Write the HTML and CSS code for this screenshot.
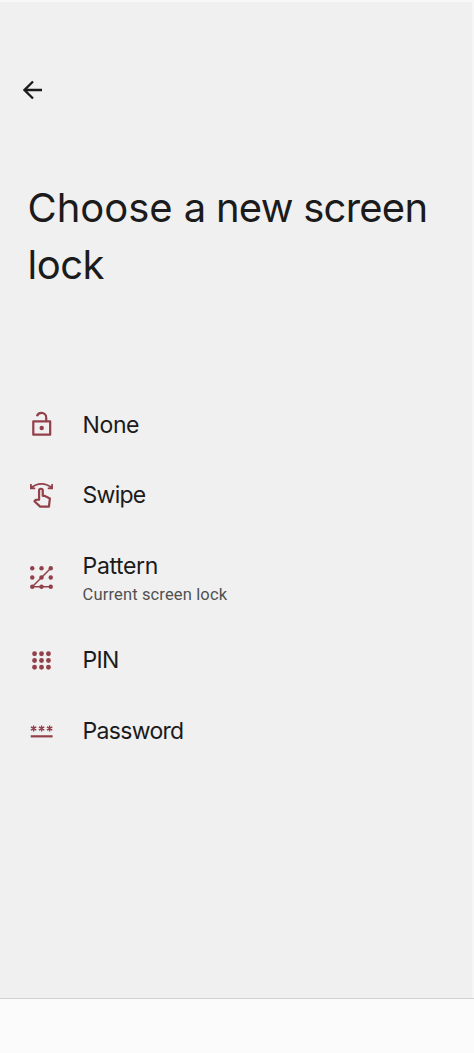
FILE: index.html
```html
<!DOCTYPE html>
<html lang="en">
<head>
<meta charset="utf-8">
<title>Choose a new screen lock</title>
<link rel="stylesheet" href="styles.css">
</head>
<body>
<main class="screen">
  <header class="toolbar">
    <svg class="back" viewBox="0 0 20 20" role="img" aria-label="Back"><path d="M19 10H2M10 1.5 1.5 10l8.500 8.500"/></svg>
  </header>
  <h1 class="title"><span class="title-start">Choose</span> <span class="title-line">a new screen</span><br><span class="title-end">lock</span></h1>
  <ul class="options">
    <li class="option">
      <svg class="icon" viewBox="0 0 28 28"><path class="line" stroke-linejoin="round" d="M5.500 10.800h17.500v13.700h-17.500zM9.300 5.500C10 3 11.700 2 14 2c2.900 0 4.900 2 4.900 4.900v4.300"/><circle cx="14.200" cy="17.600" r="2.300"/></svg>
      <span class="label none">None</span>
    </li>
    <li class="option">
      <svg class="icon" viewBox="0 0 28 28"><path class="thin" d="M3 6.500C9.500 .5 18.500 .5 25 6.500M3 2v4.500h4.500M25 2v4.500h-4.500"/><path class="line" stroke-linejoin="round" d="M11.500 18.300V8.800c0-2.400 3.800-2.400 3.800 0v5.500h1.700l5.700 2.700-1 8.500h-9.100l-5.900-5.600 1.200-1.300z"/></svg>
      <span class="label swipe">Swipe</span>
    </li>
    <li class="option tall">
      <svg class="icon" viewBox="0 0 28 28"><path class="trace" d="M23.600 4.400 4.400 23.600h19.200"/><g><circle cx="4.400" cy="4.400" r="2.300"/><circle cx="14" cy="4.400" r="2.300"/><circle cx="23.600" cy="4.400" r="2.300"/><circle cx="4.400" cy="14" r="2.300"/><circle cx="14" cy="14" r="2.300"/><circle cx="23.600" cy="14" r="2.300"/><circle cx="4.400" cy="23.600" r="2.300"/><circle cx="14" cy="23.600" r="2.300"/><circle cx="23.600" cy="23.600" r="2.300"/></g></svg>
      <div class="text"><span class="label pattern">Pattern</span><span class="summary">Current screen lock</span></div>
    </li>
    <li class="option">
      <svg class="icon" viewBox="0 0 28 28"><circle cx="6.800" cy="7" r="2.500"/><circle cx="14" cy="7" r="2.500"/><circle cx="21.200" cy="7" r="2.500"/><circle cx="6.800" cy="14" r="2.500"/><circle cx="14" cy="14" r="2.500"/><circle cx="21.200" cy="14" r="2.500"/><circle cx="6.800" cy="21" r="2.500"/><circle cx="14" cy="21" r="2.500"/><circle cx="21.200" cy="21" r="2.500"/></svg>
      <span class="label pin">PIN</span>
    </li>
    <li class="option">
      <svg class="icon" viewBox="0 0 28 28"><path d="M2.800 18.900h22.700v2.300H2.800z"/><path class="star" d="M5.800 8.700v6.400M3 10.300l5.600 3.200M8.600 10.300l-5.600 3.200M14.100 8.700v6.400M11.300 10.300l5.600 3.200M16.900 10.300l-5.600 3.200M22.400 8.700v6.400M19.600 10.300l5.600 3.200M25.200 10.300l-5.600 3.200"/></svg>
      <span class="label password">Password</span>
    </li>
  </ul>
</main>
<footer class="navbar"></footer>
</body>
</html>
```
FILE: styles.css
```css
* { box-sizing: border-box; }
body {
  margin: 0;
  height: 1053px;
  display: flex;
  flex-direction: column;
  background: #fbfbfb;
  font-family: Inter, "Liberation Sans", sans-serif;
  color: #1b1b1b;
}
.screen {
  height: 998px;
  border-top: 2px solid #f8f8f8;
  border-right: 2px solid #f6f6f6;
  background: #f0f0f0;
}
.toolbar { height: 177px; padding: 78px 0 0 22.500px; }
.back { display: block; width: 20px; height: 20px; fill: none; stroke: #1b1b1b; stroke-width: 2.300; }
.title {
  margin: 0;
  padding-left: 27.500px;
  height: 210.500px;
  font-size: 40px;
  line-height: 57px;
  font-weight: 400;
  white-space: nowrap;
}
.title-start { letter-spacing: -0.050px; }
.title-line { letter-spacing: -0.750px; }
.title-end { letter-spacing: -0.500px; }
.options { list-style: none; margin: 0; padding: 0; }
.option { display: flex; align-items: center; gap: 27px; height: 70.500px; padding-left: 28px; }
.tall { height: 94.500px; }
.icon { width: 27px; height: 27px; flex: none; fill: #92404a; }
.line, .thin, .trace, .star { fill: none; stroke: #92404a; }
.line { stroke-width: 2.300; }
.thin { stroke-width: 1.800; }
.trace { stroke-width: 1.500; }
.star { stroke-width: 1.500; }
.label { font-size: 23px; line-height: 32px; white-space: nowrap; }
.none { letter-spacing: -0.400px; }
.swipe { letter-spacing: -0.750px; }
.pattern { letter-spacing: -0.350px; }
.pin { letter-spacing: -0.700px; }
.password { letter-spacing: -0.700px; }
.option > .label, .text { padding-left: 0.600px; }
.text { display: flex; flex-direction: column; padding-top: 3px; }
.summary { font-family: Roboto, sans-serif; font-size: 16.500px; line-height: 26px; letter-spacing: 0.140px; color: #505050; }
.navbar { flex: 1; border-top: 1px solid #d2d2d2; background: #fbfbfb; }
```
